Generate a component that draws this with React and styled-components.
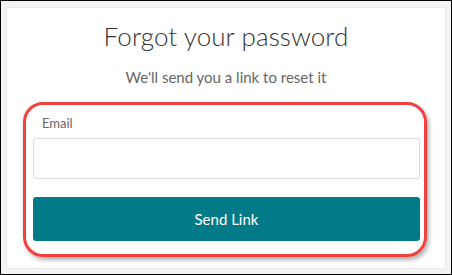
import React from "react";
import styled, { createGlobalStyle } from "styled-components";

const Global = createGlobalStyle`
  html, body { margin: 0; padding: 0; }
  body { font-family: Lato, "Open Sans", sans-serif; }
  * { box-sizing: border-box; }
`;

const Frame = styled.div`
  width: 452px;
  height: 275px;
  border: 1px solid #000;
  background: #f4f4f4;
  padding: 7px 6px 6px 6px;
  display: flex;
`;

const Card = styled.div`
  flex: 1;
  background: #fff;
  box-shadow: 0 0 2px rgba(0, 0, 0, 0.12);
  padding-top: 13px;
  display: flex;
  flex-direction: column;
`;

const Title = styled.h1`
  margin: 0;
  font-family: Lato, sans-serif;
  font-weight: 300;
  font-size: 26px;
  line-height: 30px;
  color: #333;
  text-align: center;
  letter-spacing: 0.1px;
`;

const Subtitle = styled.p`
  margin: 17px 0 0;
  font-family: Lato, sans-serif;
  font-weight: 400;
  font-size: 15px;
  line-height: 18px;
  color: #666;
  text-align: center;
`;

const Highlight = styled.div`
  margin: 16px 0 0 16px;
  width: 404px;
  border: 3px solid #f2403f;
  border-radius: 20px;
  box-shadow: 2px 3px 4px rgba(0, 0, 0, 0.3);
  padding: 10px 4px 13px 7px;
  display: flex;
  flex-direction: column;
`;

const Label = styled.label`
  font-family: Lato, sans-serif;
  font-size: 13px;
  line-height: 16px;
  color: #666;
  padding-left: 9px;
`;

const Input = styled.input`
  margin-top: 7px;
  height: 41px;
  width: 100%;
  border: 1px solid #dcdcdc;
  border-radius: 3px;
  background: #fff;
  outline: none;
`;

const Button = styled.button`
  margin-top: 18px;
  height: 44px;
  width: 100%;
  border: none;
  border-radius: 3px;
  background: #037a87;
  color: #fff;
  font-family: Lato, sans-serif;
  font-size: 15px;
  font-weight: 400;
  cursor: pointer;
`;

export default function App() {
  return (
    <>
      <Global />
      <Frame>
        <Card>
          <Title>Forgot your password</Title>
          <Subtitle>We'll send you a link to reset it</Subtitle>
          <Highlight>
            <Label htmlFor="email">Email</Label>
            <Input id="email" type="email" />
            <Button>Send Link</Button>
          </Highlight>
        </Card>
      </Frame>
    </>
  );
}
